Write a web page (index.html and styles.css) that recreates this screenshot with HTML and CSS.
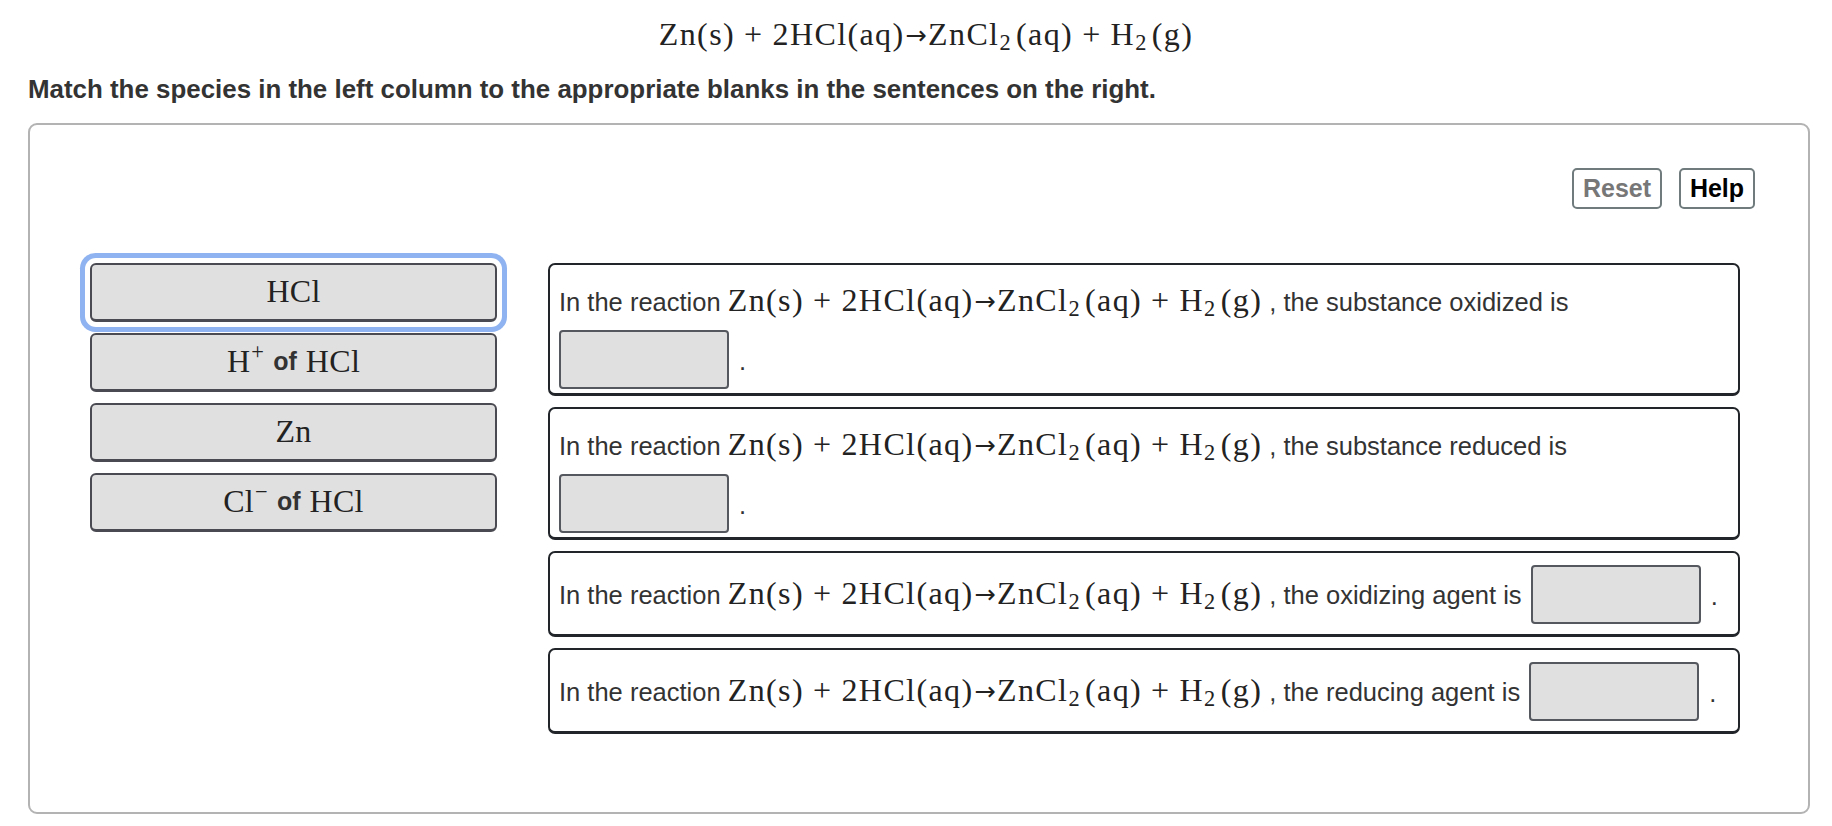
FILE: index.html
```html
<!DOCTYPE html>
<html>
<head>
<meta charset="utf-8">
<link rel="stylesheet" href="styles.css">
</head>
<body>
<div class="page">
  <div class="title"><span class="m">Zn(s)<span class="op">+</span>2HCl(aq)<span class="arr">→</span>ZnCl<span class="sub">2</span><span class="gap"></span>(aq)<span class="op">+</span>H<span class="sub">2</span><span class="gap"></span>(g)</span></div>
  <div class="instruction">Match the species in the left column to the appropriate blanks in the sentences on the right.</div>
  <div class="panel">
    <div class="toolbar">
      <button class="btn btn-reset">Reset</button>
      <button class="btn btn-help">Help</button>
    </div>
    <div class="workspace">
      <div class="items">
        <div class="item focused"><span class="m">HCl</span></div>
        <div class="item"><span class="m">H<span class="sup">+</span></span> <b class="of">of</b> <span class="m">HCl</span></div>
        <div class="item"><span class="m">Zn</span></div>
        <div class="item"><span class="m">Cl<span class="sup">−</span></span> <b class="of">of</b> <span class="m">HCl</span></div>
      </div>
      <div class="sentences">
        <div class="sentence tall">
          <span class="stext">In the reaction <span class="m">Zn(s)<span class="op">+</span>2HCl(aq)<span class="arr">→</span>ZnCl<span class="sub">2</span><span class="gap"></span>(aq)<span class="op">+</span>H<span class="sub">2</span><span class="gap"></span>(g)</span> , the substance oxidized is</span>
          <span class="blank"></span><span class="dot">.</span>
        </div>
        <div class="sentence tall">
          <span class="stext">In the reaction <span class="m">Zn(s)<span class="op">+</span>2HCl(aq)<span class="arr">→</span>ZnCl<span class="sub">2</span><span class="gap"></span>(aq)<span class="op">+</span>H<span class="sub">2</span><span class="gap"></span>(g)</span> , the substance reduced is</span>
          <span class="blank"></span><span class="dot">.</span>
        </div>
        <div class="sentence">
          <span class="stext">In the reaction <span class="m">Zn(s)<span class="op">+</span>2HCl(aq)<span class="arr">→</span>ZnCl<span class="sub">2</span><span class="gap"></span>(aq)<span class="op">+</span>H<span class="sub">2</span><span class="gap"></span>(g)</span> , the oxidizing agent is</span>
          <span class="blank"></span><span class="dot">.</span>
        </div>
        <div class="sentence">
          <span class="stext">In the reaction <span class="m">Zn(s)<span class="op">+</span>2HCl(aq)<span class="arr">→</span>ZnCl<span class="sub">2</span><span class="gap"></span>(aq)<span class="op">+</span>H<span class="sub">2</span><span class="gap"></span>(g)</span> , the reducing agent is</span>
          <span class="blank"></span><span class="dot">.</span>
        </div>
      </div>
    </div>
  </div>
</div>
</body>
</html>
```

FILE: styles.css
```css
html, body {
  margin: 0;
  padding: 0;
  background: #ffffff;
}
body {
  font-family: "Liberation Sans", Arial, sans-serif;
  color: #333333;
}
.page {
  padding: 14px 22px 0 28px;
}
.m {
  font-family: "Liberation Serif", "Times New Roman", serif;
  font-size: 32px;
  letter-spacing: 1.4px;
  color: #222;
  white-space: nowrap;
}
.op {
  display: inline-block;
  margin: 0 9px;
  font-weight: 300;
}
.arr {
  display: inline-block;
  font-family: "DejaVu Sans", sans-serif;
  font-size: 0.8em;
  letter-spacing: 0;
  margin: 0 1px;
  position: relative;
  top: -1px;
}
.sub {
  font-size: 0.7em;
  vertical-align: -0.22em;
  line-height: 0;
}
.sup {
  font-size: 0.7em;
  vertical-align: 0.55em;
  line-height: 0;
  margin-left: 1px;
}
.gap {
  display: inline-block;
  width: 4px;
}
.title {
  text-align: center;
  line-height: 40px;
  height: 40px;
  padding-left: 14px;
}
.instruction {
  margin-top: 20px;
  font-weight: bold;
  font-size: 25.9px;
  line-height: 30px;
  color: #333;
}
.panel {
  margin-top: 19px;
  height: 687px;
  border: 2px solid #b3b3b3;
  border-radius: 9px;
  box-sizing: content-box;
}
.toolbar {
  display: flex;
  justify-content: flex-end;
  gap: 17px;
  padding: 43px 53px 0 0;
}
.btn {
  font-family: "Liberation Sans", Arial, sans-serif;
  font-weight: bold;
  font-size: 25px;
  height: 41px;
  padding: 0 7px;
  background: #fff;
  border: 2px solid #6f7b7d;
  border-radius: 5px;
  line-height: 37px;
}
.btn-reset {
  color: #777777;
  width: 90px;
}
.btn-help {
  color: #000000;
  width: 76px;
}
.workspace {
  display: flex;
  gap: 51px;
  padding: 54px 0 0 60px;
}
.items {
  width: 407px;
  display: flex;
  flex-direction: column;
  gap: 11px;
}
.item {
  height: 59px;
  box-sizing: border-box;
  background: #e0e0e0;
  border: 2px solid #4a4a52;
  border-bottom-width: 3px;
  border-radius: 6px;
  display: flex;
  align-items: center;
  justify-content: center;
  gap: 9px;
  padding-bottom: 2px;
}
.item .m {
  letter-spacing: 0.3px;
}
.focused {
  box-shadow: 0 0 0 5px #ffffff, 0 0 0 10px #8fb3f0;
  border-radius: 6px;
}
.of {
  font-family: "Liberation Sans", Arial, sans-serif;
  font-size: 25px;
  color: #333;
}
.sentences {
  width: 1192px;
  display: flex;
  flex-direction: column;
  gap: 11px;
}
.sentence {
  box-sizing: border-box;
  border: 2px solid #22262a;
  border-bottom-width: 3px;
  border-radius: 7px;
  padding: 10px 9px 8px 9px;
  display: flex;
  flex-wrap: wrap;
  align-items: center;
  min-height: 81px;
  font-size: 25.5px;
  color: #333;
}
.sentence.tall {
  height: 133px;
}
.stext {
  line-height: 51px;
  white-space: nowrap;
  margin-right: 9px;
}
.blank {
  display: inline-block;
  width: 170px;
  height: 59px;
  box-sizing: border-box;
  background: #e0e0e0;
  border: 2px solid #55585e;
  border-radius: 4px;
}
.dot {
  margin-left: 10px;
  line-height: 59px;
  padding-top: 4px;
}
```
